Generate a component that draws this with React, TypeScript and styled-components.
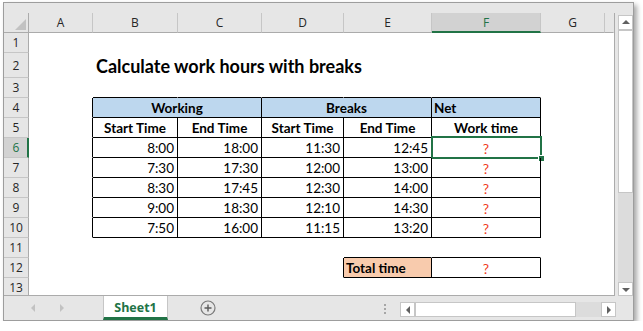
import styled, { createGlobalStyle } from "styled-components";

const GlobalStyle = createGlobalStyle`
  body {
    margin: 0;
    background: #ffffff;
  }
`;

const GREEN = "#217346";
const BLUE = "#bdd7ee";
const PEACH = "#f8cbad";
const RED = "#f03a1e";

const COLS = ["A", "B", "C", "D", "E", "F", "G"];
const COL_W = [64, 85, 84, 82, 88, 109, 64];
const ROW_H = [20, 25, 20, 20, 20, 20, 20, 20, 20, 20, 20, 20, 20];
const SEL_ROW = 6;
const SEL_COL = "F";

type CellDef = {
  text: string;
  span?: number;
  align?: "left" | "center" | "right";
  bold?: boolean;
  bg?: string;
  red?: boolean;
  title?: boolean;
};

const content: Record<string, CellDef> = {
  B2: { text: "Calculate work hours with breaks", bold: true, title: true },
  B4: { text: "Working", span: 2, align: "center", bold: true, bg: BLUE },
  D4: { text: "Breaks", span: 2, align: "center", bold: true, bg: BLUE },
  F4: { text: "Net", bold: true, bg: BLUE },
  B5: { text: "Start Time", align: "center", bold: true },
  C5: { text: "End Time", align: "center", bold: true },
  D5: { text: "Start Time", align: "center", bold: true },
  E5: { text: "End Time", align: "center", bold: true },
  F5: { text: "Work time", align: "center", bold: true },
  E12: { text: "Total time", bold: true, bg: PEACH },
  F12: { text: "?", align: "center", red: true },
};

const times = [
  ["8:00", "18:00", "11:30", "12:45"],
  ["7:30", "17:30", "12:00", "13:00"],
  ["8:30", "17:45", "12:30", "14:00"],
  ["9:00", "18:30", "12:10", "14:30"],
  ["7:50", "16:00", "11:15", "13:20"],
];
times.forEach((row, i) => {
  row.forEach((t, j) => {
    content[COLS[j + 1] + (i + 6)] = { text: t, align: "right" };
  });
  content["F" + (i + 6)] = { text: "?", align: "center", red: true };
});

// cells that carry black borders
const boxed = (r: number, c: number) => {
  if (r >= 4 && r <= 10 && c >= 1 && c <= 5) return true;
  if (r === 12 && (c === 4 || c === 5)) return true;
  return false;
};

const Frame = styled.div`
  margin: 2px 0 0 3px;
  width: 631px;
  height: 319px;
  box-sizing: border-box;
  border: 1px solid #9d9d9d;
  background: #e6e6e6;
  box-shadow: 3px 3px 5px rgba(0, 0, 0, 0.35);
  display: flex;
  flex-direction: column;
  font-family: "Open Sans", "Noto Sans", sans-serif;
`;

const TopStrip = styled.div`
  height: 10px;
`;

const Main = styled.div`
  display: flex;
  height: 283px;
`;

const Sheet = styled.div`
  width: 611px;
  height: 283px;
  box-sizing: border-box;
  border-right: 1px solid #ababab;
  border-bottom: 1px solid #ababab;
  background: #ffffff;
  display: grid;
  grid-template-columns: 25px ${COL_W.map((w) => w + "px").join(" ")} 9px;
  grid-template-rows: 20px ${ROW_H.map((h) => h + "px").join(" ")};
  overflow: hidden;
`;

const Corner = styled.div`
  position: relative;
  background: #e6e6e6;
  border-right: 1px solid #ababab;
  border-bottom: 1px solid #ababab;

  &::after {
    content: "";
    position: absolute;
    right: 2px;
    bottom: 2px;
    border-left: 11px solid transparent;
    border-bottom: 11px solid #c2c2c2;
  }
`;

const ColHead = styled.div<{ $sel?: boolean; $last?: boolean }>`
  box-sizing: border-box;
  background: ${(p) => (p.$sel ? "#d2d2d2" : "#e6e6e6")};
  border-right: 1px solid ${(p) => (p.$last ? "transparent" : "#c6c6c6")};
  border-bottom: ${(p) => (p.$sel ? `2px solid ${GREEN}` : "1px solid #ababab")};
  color: ${(p) => (p.$sel ? GREEN : "#262626")};
  font-size: 12px;
  line-height: 19px;
  text-align: center;
`;

const RowHead = styled.div<{ $sel?: boolean }>`
  box-sizing: border-box;
  background: ${(p) => (p.$sel ? "#d2d2d2" : "#e6e6e6")};
  border-right: ${(p) => (p.$sel ? `2px solid ${GREEN}` : "1px solid #ababab")};
  border-bottom: 1px solid #c6c6c6;
  color: ${(p) => (p.$sel ? GREEN : "#262626")};
  font-size: 12px;
  display: flex;
  align-items: center;
  justify-content: center;
  padding-left: ${(p) => (p.$sel ? "1px" : "0")};
`;

const Cell = styled.div<{
  $span: number;
  $right: string;
  $bottom: string;
  $align: string;
  $bold: boolean;
  $bg: string;
  $red: boolean;
  $title: boolean;
  $sel: boolean;
}>`
  position: relative;
  box-sizing: border-box;
  grid-column: span ${(p) => p.$span};
  border-right: 1px solid ${(p) => p.$right};
  border-bottom: 1px solid ${(p) => p.$bottom};
  background: ${(p) => p.$bg};
  color: ${(p) => (p.$red ? RED : "#000000")};
  font-family: Lato, "Open Sans", sans-serif;
  font-size: ${(p) => (p.$title ? "18px" : p.$red ? "14px" : "13.5px")};
  font-weight: ${(p) => (p.$bold ? 700 : 400)};
  line-height: ${(p) => (p.$title ? "22px" : "17px")};
  white-space: nowrap;
  display: flex;
  align-items: flex-end;
  justify-content: ${(p) =>
    p.$align === "center" ? "center" : p.$align === "right" ? "flex-end" : "flex-start"};
  padding: 0 ${(p) => (p.$align === "right" ? "3px" : "0")} 0
    ${(p) => (p.$align === "left" ? (p.$title ? "3px" : "2px") : "0")};

  ${(p) =>
    p.$sel &&
    `
    &::before {
      content: "";
      position: absolute;
      top: -2px;
      left: -1px;
      right: -2px;
      bottom: -2px;
      border: 2px solid ${GREEN};
    }
    &::after {
      content: "";
      position: absolute;
      right: -5px;
      bottom: -5px;
      width: 5px;
      height: 5px;
      background: ${GREEN};
      border: 1px solid #ffffff;
    }
  `}
`;

const VScroll = styled.div`
  width: 18px;
  box-sizing: border-box;
  padding: 2px 0 0 3px;
  display: flex;
  flex-direction: column;
`;

const Track = styled.div`
  flex: 1;
  display: flex;
  flex-direction: column;
  background: #dcdcdc;
`;

const ScrollBtn = styled.div<{ $h: number }>`
  box-sizing: border-box;
  height: ${(p) => p.$h}px;
  width: 15px;
  background: #ffffff;
  border: 1px solid #c6c6c6;
  display: flex;
  align-items: center;
  justify-content: center;
`;

const Thumb = styled.div<{ $h?: number; $w?: number }>`
  box-sizing: border-box;
  ${(p) => (p.$h ? `height: ${p.$h}px;` : "")}
  ${(p) => (p.$w ? `width: ${p.$w}px;` : "")}
  background: #ffffff;
  border: 1px solid #c6c6c6;
`;

const Arrow = styled.span<{ $dir: "up" | "down" | "left" | "right"; $color?: string }>`
  width: 0;
  height: 0;
  border: 4px solid transparent;
  ${(p) =>
    p.$dir === "up"
      ? `border-bottom: 4px solid ${p.$color || "#606060"}; border-top-width: 0; margin-bottom: 1px;`
      : p.$dir === "down"
      ? `border-top: 4px solid ${p.$color || "#606060"}; border-bottom-width: 0; margin-top: 1px;`
      : p.$dir === "left"
      ? `border-right: 4px solid ${p.$color || "#606060"}; border-left-width: 0;`
      : `border-left: 4px solid ${p.$color || "#606060"}; border-right-width: 0;`}
`;

const TabBar = styled.div`
  flex: 1;
  display: flex;
  padding-right: 17px;
`;

const NavArrows = styled.div`
  width: 99px;
  box-sizing: border-box;
  padding-left: 27px;
  display: flex;
  align-items: center;
  gap: 25px;
`;

const Tab = styled.div`
  width: 65px;
  box-sizing: border-box;
  background: #ffffff;
  border-left: 1px solid #c6c6c6;
  border-right: 1px solid #c6c6c6;
  border-bottom: 3px solid ${GREEN};
  color: ${GREEN};
  font-size: 12.5px;
  font-weight: 700;
  display: flex;
  align-items: center;
  justify-content: center;
  padding-top: 2px;
`;

const AddSheet = styled.div`
  margin-left: 32px;
  display: flex;
  align-items: center;
  padding-bottom: 1px;
`;

const RightGroup = styled.div`
  margin-left: auto;
  display: flex;
  align-items: flex-start;
`;

const Dots = styled.div`
  margin-top: 8px;
  margin-right: 14px;
  display: flex;
  flex-direction: column;
  gap: 2px;

  & > span {
    width: 2px;
    height: 2px;
    background: #a6a6a6;
  }
`;

const HScroll = styled.div`
  margin-top: 6px;
  height: 15px;
  width: 216px;
  display: flex;
  background: #dcdcdc;
`;

const HBtn = styled(ScrollBtn)`
  height: 15px;
`;

function App() {
  const cells: React.ReactNode[] = [];

  cells.push(<Corner key="corner" />);
  COLS.forEach((c) => (
    cells.push(
      <ColHead key={"h" + c} $sel={c === SEL_COL}>
        {c}
      </ColHead>
    )
  ));
  cells.push(<ColHead key="hx" $last />);

  for (let r = 1; r <= ROW_H.length; r++) {
    cells.push(
      <RowHead key={"r" + r} $sel={r === SEL_ROW}>
        {r}
      </RowHead>
    );
    let c = 0;
    while (c < COLS.length) {
      const key = COLS[c] + r;
      const def = content[key];
      const span = def?.span ?? 1;
      const last = c + span - 1;
      const right = boxed(r, last) || boxed(r, last + 1) ? "#000000" : "transparent";
      const bottom = boxed(r, c) || boxed(r + 1, c) ? "#000000" : "transparent";
      cells.push(
        <Cell
          key={key}
          $span={span}
          $right={right}
          $bottom={bottom}
          $align={def?.align ?? "left"}
          $bold={!!def?.bold}
          $bg={def?.bg ?? "transparent"}
          $red={!!def?.red}
          $title={!!def?.title}
          $sel={COLS[c] === SEL_COL && r === SEL_ROW}
        >
          {def?.text}
        </Cell>
      );
      c += span;
    }
    cells.push(
      <Cell
        key={"x" + r}
        $span={1}
        $right="transparent"
        $bottom="transparent"
        $align="left"
        $bold={false}
        $bg="transparent"
        $red={false}
        $title={false}
        $sel={false}
      />
    );
  }

  return (
    <>
      <GlobalStyle />
      <Frame>
        <TopStrip />
        <Main>
          <Sheet>{cells}</Sheet>
          <VScroll>
            <Track>
              <ScrollBtn $h={15}>
                <Arrow $dir="up" />
              </ScrollBtn>
              <Thumb $h={163} />
              <div style={{ flex: 1 }} />
              <ScrollBtn $h={14}>
                <Arrow $dir="down" />
              </ScrollBtn>
            </Track>
          </VScroll>
        </Main>
        <TabBar>
          <NavArrows>
            <Arrow $dir="left" $color="#c2c2c2" />
            <Arrow $dir="right" $color="#c2c2c2" />
          </NavArrows>
          <Tab>Sheet1</Tab>
          <AddSheet>
            <svg width="16" height="16" viewBox="0 0 16 16">
              <circle cx="8" cy="8" r="7" fill="none" stroke="#7a7a7a" strokeWidth="1.2" />
              <path d="M8 4.5v7M4.5 8h7" stroke="#5a5a5a" strokeWidth="1.4" />
            </svg>
          </AddSheet>
          <RightGroup>
            <Dots>
              <span />
              <span />
              <span />
            </Dots>
            <HScroll>
              <HBtn $h={15}>
                <Arrow $dir="left" />
              </HBtn>
              <Thumb $w={161} />
              <div style={{ flex: 1 }} />
              <HBtn $h={15}>
                <Arrow $dir="right" />
              </HBtn>
            </HScroll>
          </RightGroup>
        </TabBar>
      </Frame>
    </>
  );
}

export default App;
